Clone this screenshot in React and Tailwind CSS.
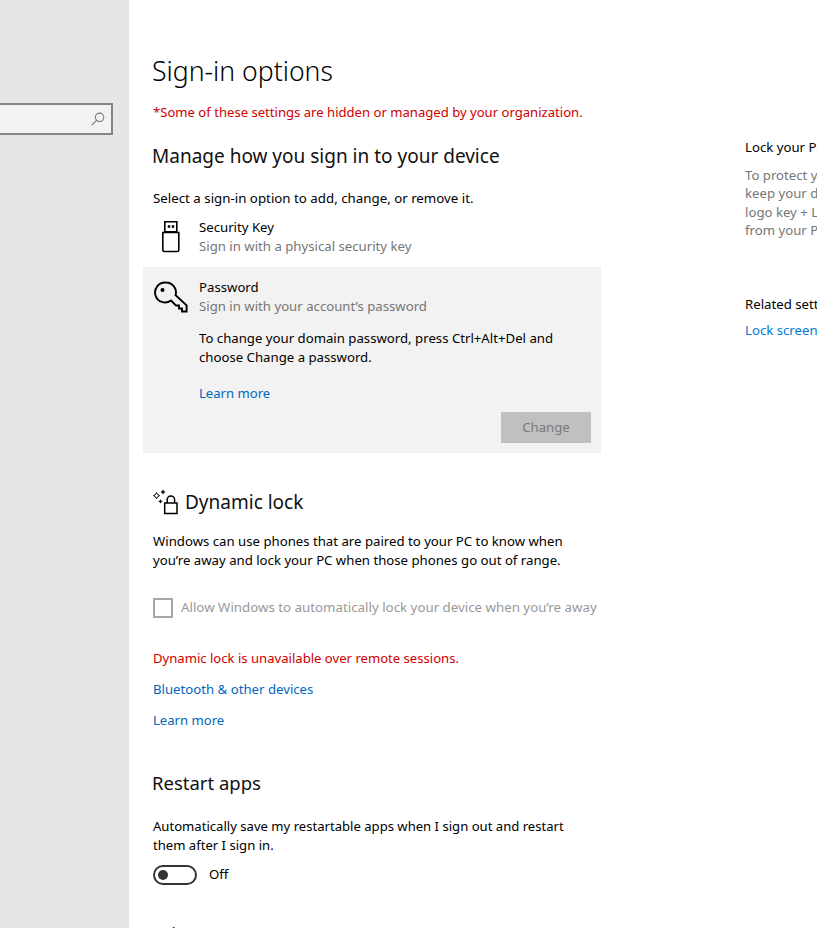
import React from 'react';

const font = { fontFamily: '"Noto Sans", sans-serif' };

const UsbIcon = () => (
    <svg width="20" height="34" viewBox="0 0 20 34" fill="none" stroke="#000" strokeWidth="1.6">
        <path d="M3.8 1.8h12v10h-12z" />
        <path d="M1.8 12.5h16v17.5a1.5 1.5 0 0 1-1.5 1.5h-13a1.5 1.5 0 0 1-1.5-1.5z" />
        <path d="M7 5.5h2v2H7zM11 5.5h2v2h-2z" fill="#000" strokeWidth="0.5" />
    </svg>
);

const KeyIcon = () => (
    <svg width="34" height="34" viewBox="0 0 34 34" fill="none" stroke="#000" strokeWidth="1.9" strokeLinejoin="miter">
        <path d="M12 1.5a10 10 0 0 1 9.6 12.6l11 10.2v6.2h-4.6v-3h-3v-3h-3l-5-5A10 10 0 1 1 12 1.5z" />
        <circle cx="8.5" cy="9" r="2" fill="#000" stroke="none" />
    </svg>
);

const DynamicLockIcon = () => (
    <svg width="26" height="26" viewBox="0 0 26 26" fill="none" stroke="#000">
        <path d="M3.5 3.5l1.1 2 2 1.1-2 1.1-1.1 2-1.1-2-2-1.1 2-1.1z" strokeWidth="1" />
        <path d="M10 .8l.8 1.4 1.4.8-1.4.8-.8 1.4-.8-1.4-1.4-.8 1.4-.8z" fill="#000" strokeWidth="0.3" />
        <path d="M7.5 10.5l.7 1.2 1.2.7-1.2.7-.7 1.2-.7-1.2-1.2-.7 1.2-.7z" fill="#000" strokeWidth="0.3" />
        <rect x="11.7" y="14" width="12.3" height="10.5" strokeWidth="1.5" />
        <path d="M14.2 14v-3.4a3.7 3.7 0 0 1 7.4 0V14" strokeWidth="1.5" />
    </svg>
);

const SearchIcon = () => (
    <svg width="14" height="14" viewBox="0 0 14 14" fill="none" stroke="#7a7a7a" strokeWidth="1.1">
        <circle cx="8.6" cy="5.3" r="4.2" />
        <path d="M5.6 8.3L.8 13.2" />
    </svg>
);

const SignInOption = ({ icon, iconClass, title, subtitle }) => (
    <div className="flex">
        <div className={`w-[56px] flex justify-center shrink-0 ${iconClass}`}>{icon}</div>
        <div>
            <div className="text-[13.2px] leading-[19px] text-black">{title}</div>
            <div className="text-[13.2px] leading-[19px] text-[#767676]">{subtitle}</div>
        </div>
    </div>
);

export default function App() {
    return (
        <div className="flex h-[928px] w-[817px] overflow-hidden bg-white" style={font}>
            {/* left nav */}
            <aside className="w-[129px] shrink-0 bg-[#e6e6e6] pt-[103px]">
                <div className="h-[32px] w-[113px] border-2 border-l-0 border-[#858585] bg-[#f2f2f2] flex items-center justify-end pr-[6px]">
                    <SearchIcon />
                </div>
            </aside>

            {/* main column */}
            <main className="w-[616px] shrink-0 pl-[22px] pt-[53px]">
                <h1 className="pl-[1px] text-[26.6px] font-light leading-[36px] text-black">Sign-in options</h1>
                <p className="mt-[14px] pl-[2px] text-[13.1px] leading-[19px] text-[#d00000]">
                    *Some of these settings are hidden or managed by your organization.
                </p>
                <h2 className="mt-[20px] pl-[1px] text-[19px] leading-[28px] text-[#111]">Manage how you sign in to your device</h2>
                <p className="mt-[19px] pl-[2px] text-[13.3px] leading-[19px] text-black">
                    Select a sign-in option to add, change, or remove it.
                </p>

                <div className="-ml-[8px] mt-[1px] w-[458px]">
                    <div className="h-[58px] pt-[9px]">
                        <SignInOption icon={<UsbIcon />} iconClass="mt-[2px]" title="Security Key" subtitle="Sign in with a physical security key" />
                    </div>
                    <div className="h-[186px] bg-[#f2f2f2] pt-[11px]">
                        <SignInOption icon={<KeyIcon />} iconClass="mt-[3px]" title="Password" subtitle="Sign in with your account’s password" />
                        <p className="mt-[13px] pl-[56px] text-[13.2px] leading-[18.5px] text-black">
                            To change your domain password, press Ctrl+Alt+Del and<br />choose Change a password.
                        </p>
                        <a className="block mt-[18px] pl-[56px] text-[13.1px] leading-[19px] text-[#0067c0]">Learn more</a>
                        <div className="flex justify-end pr-[10px] mt-[9px]">
                            <button className="h-[31px] w-[90px] bg-[#c0c0c0] text-[13.2px] text-[#7a7a7a]">Change</button>
                        </div>
                    </div>
                </div>

                <div className="mt-[34px] flex items-center gap-[6px] pl-[2px] h-[30px]">
                    <DynamicLockIcon />
                    <h2 className="text-[19px] leading-[28px] text-[#111]">Dynamic lock</h2>
                </div>
                <p className="mt-[15px] pl-[2px] text-[13.2px] leading-[19px] text-black">
                    Windows can use phones that are paired to your PC to know when<br />
                    you’re away and lock your PC when those phones go out of range.
                </p>
                <div className="mt-[28px] pl-[2px] flex items-center gap-[8px] h-[20px]">
                    <span className="w-[20px] h-[20px] border-2 border-[#a6a6a6]" />
                    <span className="text-[13.3px] text-[#999]">Allow Windows to automatically lock your device when you’re away</span>
                </div>
                <p className="mt-[31px] pl-[2px] text-[13.1px] leading-[19px] text-[#d00000]">Dynamic lock is unavailable over remote sessions.</p>
                <a className="block mt-[12px] pl-[2px] text-[13.2px] leading-[19px] text-[#0067c0]">Bluetooth &amp; other devices</a>
                <a className="block mt-[12px] pl-[2px] text-[13.1px] leading-[19px] text-[#0067c0]">Learn more</a>

                <h2 className="mt-[39px] pl-[1px] text-[18.5px] leading-[28px] text-[#111]">Restart apps</h2>
                <p className="mt-[20px] pl-[2px] text-[13.1px] leading-[19px] text-black">
                    Automatically save my restartable apps when I sign out and restart<br />them after I sign in.
                </p>
                <div className="mt-[10px] pl-[2px] flex items-center gap-[12px] h-[20px]">
                    <span className="w-[44px] h-[20px] rounded-full border-2 border-[#333] flex items-center pl-[3px]">
                        <span className="w-[10px] h-[10px] rounded-full bg-[#333]" />
                    </span>
                    <span className="text-[13.2px] text-black">Off</span>
                </div>
                <h2 className="mt-[36px] pl-[1px] text-[19px] leading-[28px] text-[#111]">Privacy</h2>
            </main>

            {/* right rail, cut off by the window */}
            <div className="pt-[138px] whitespace-nowrap shrink-0">
                <div className="text-[13.2px] leading-[19px] text-black">Lock your PC</div>
                <p className="mt-[9px] text-[13.2px] leading-[18.4px] text-[#767676]">
                    To protect your<br />keep your device<br />logo key + L<br />from your PC
                </p>
                <div className="mt-[55px] text-[13.2px] leading-[19px] text-black">Related settings</div>
                <a className="block mt-[7px] text-[13.2px] leading-[19px] text-[#0078d7]">Lock screen</a>
            </div>
        </div>
    );
}
